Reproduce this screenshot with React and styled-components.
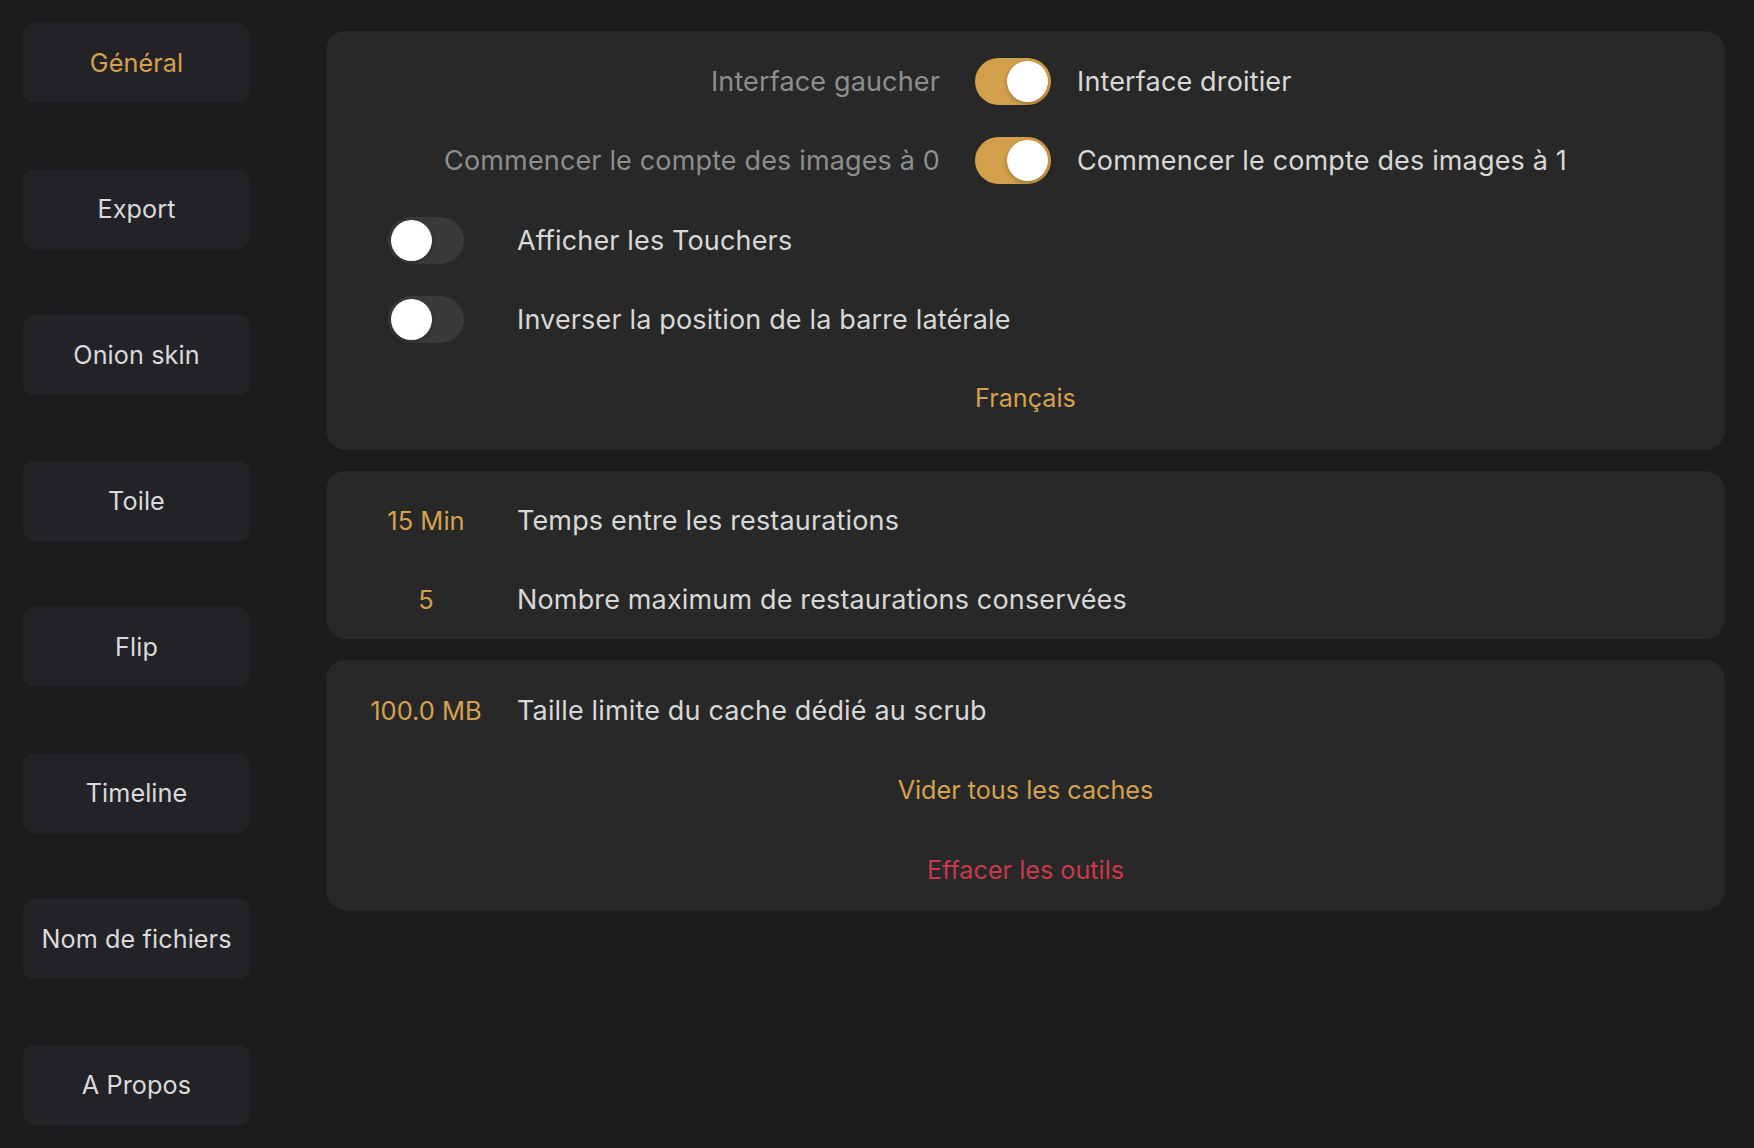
import React from "react";
import styled, { createGlobalStyle } from "styled-components";

const Global = createGlobalStyle`
  html, body { margin: 0; padding: 0; background: #1c1c1c; }
  body { font-family: Inter, "Noto Sans", sans-serif; -webkit-font-smoothing: antialiased; }
  * { box-sizing: border-box; }
`;

const Page = styled.div`
  display: flex;
  align-items: flex-start;
  width: 1754px;
  height: 1148px;
  padding: 23px 29px 0 23px;
  background: #1c1c1c;
  overflow: hidden;
`;

const Sidebar = styled.nav`
  display: flex;
  flex-direction: column;
  gap: 66px;
  width: 227px;
  flex-shrink: 0;
`;

const NavButton = styled.div`
  height: 80px;
  border-radius: 11px;
  background: #232327;
  display: flex;
  align-items: center;
  justify-content: center;
  padding-bottom: 1px;
  font-size: 25.2px;
  letter-spacing: 0.1px;
  color: ${(p) => (p.$active ? "#d4a14e" : "#dadada")};
`;

const Main = styled.main`
  flex: 1;
  margin-left: 76px;
  margin-top: 8px;
  display: flex;
  flex-direction: column;
  gap: 21px;
`;

const Card = styled.section`
  background: #282828;
  border-radius: 20px;
  padding: ${(p) => p.$pad || "10px 0 0"};
  display: flex;
  flex-direction: column;
`;

const Row = styled.div`
  height: ${(p) => p.$h || 80}px;
  display: flex;
  align-items: center;
  font-size: 27px;
  letter-spacing: 0.15px;
`;

const ValueCol = styled.div`
  width: 140px;
  margin-left: 30px;
  margin-right: 21px;
  display: flex;
  justify-content: center;
  color: #d4a14e;
  font-size: 25.5px;
  letter-spacing: 0;
  white-space: nowrap;
`;

const Label = styled.span`
  color: ${(p) => (p.$dim ? "#8e8e8e" : "#d8d8d8")};
  white-space: nowrap;
`;

const LeftLabel = styled(Label)`
  width: 614px;
  text-align: right;
  margin-right: 35px;
`;

const RightLabel = styled(Label)`
  margin-left: 26px;
`;

const CenterLink = styled.div`
  width: 100%;
  text-align: center;
  font-size: 25.2px;
  letter-spacing: 0;
  color: ${(p) => (p.$danger ? "#c9384e" : "#d4a14e")};
`;

const Track = styled.div`
  position: relative;
  width: 76px;
  height: 47px;
  border-radius: 24px;
  background: ${(p) => (p.$on ? "#d29f4b" : "#3a3a3c")};
  flex-shrink: 0;
`;

const Knob = styled.div`
  position: absolute;
  top: 3px;
  left: ${(p) => (p.$on ? "32px" : "3px")};
  width: 41px;
  height: 41px;
  border-radius: 50%;
  background: #ffffff;
  box-shadow: 0 2px 4px rgba(0, 0, 0, 0.25);
`;

const Toggle = ({ on }) => (
  <Track $on={on}>
    <Knob $on={on} />
  </Track>
);

const nav = [
  "Général",
  "Export",
  "Onion skin",
  "Toile",
  "Flip",
  "Timeline",
  "Nom de fichiers",
  "A Propos",
];

export default function App() {
  return (
    <>
      <Global />
      <Page>
        <Sidebar>
          {nav.map((n, i) => (
            <NavButton key={n} $active={i === 0}>
              {n}
            </NavButton>
          ))}
        </Sidebar>
        <Main>
          <Card $pad="11px 0 13px">
            <Row $h={79}>
              <LeftLabel $dim>Interface gaucher</LeftLabel>
              <Toggle on />
              <RightLabel>Interface droitier</RightLabel>
            </Row>
            <Row $h={79}>
              <LeftLabel $dim>Commencer le compte des images à 0</LeftLabel>
              <Toggle on />
              <RightLabel>Commencer le compte des images à 1</RightLabel>
            </Row>
            <Row $h={80}>
              <ValueCol>
                <Toggle />
              </ValueCol>
              <Label>Afficher les Touchers</Label>
            </Row>
            <Row $h={79}>
              <ValueCol>
                <Toggle />
              </ValueCol>
              <Label>Inverser la position de la barre latérale</Label>
            </Row>
            <Row $h={78}>
              <CenterLink>Français</CenterLink>
            </Row>
          </Card>
          <Card $pad="10px 0 0">
            <Row $h={79}>
              <ValueCol>15 Min</ValueCol>
              <Label>Temps entre les restaurations</Label>
            </Row>
            <Row $h={79}>
              <ValueCol>5</ValueCol>
              <Label>Nombre maximum de restaurations conservées</Label>
            </Row>
          </Card>
          <Card $pad="10px 0 0">
            <Row $h={80}>
              <ValueCol>100.0 MB</ValueCol>
              <Label>Taille limite du cache dédié au scrub</Label>
            </Row>
            <Row $h={80}>
              <CenterLink>Vider tous les caches</CenterLink>
            </Row>
            <Row $h={80}>
              <CenterLink $danger>Effacer les outils</CenterLink>
            </Row>
          </Card>
        </Main>
      </Page>
    </>
  );
}
